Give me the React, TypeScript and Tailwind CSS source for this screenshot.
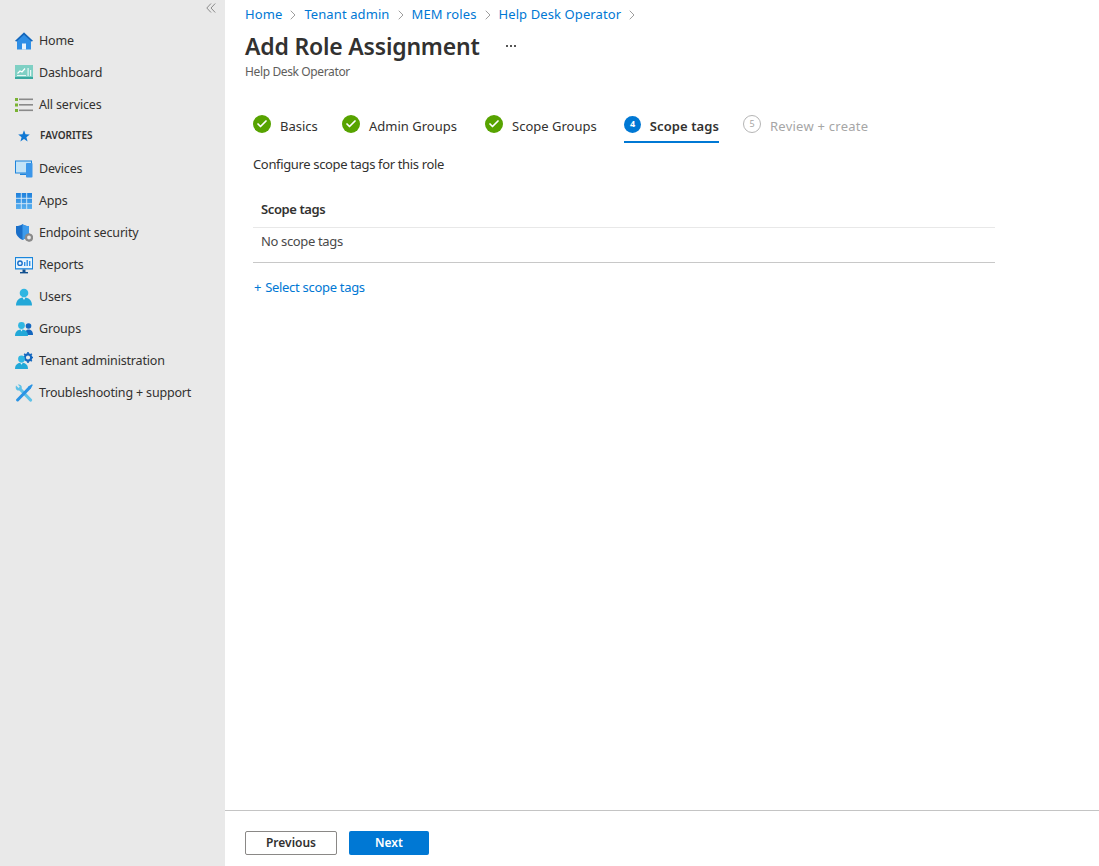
import { ChevronRight, Check } from "lucide-react";
import type { ReactNode } from "react";

const HomeIcon = () => (
  <svg width="18" height="18" viewBox="0 0 18 18">
    <path d="M9 0.5 L18 9 L16 9 L16 17.5 L2 17.5 L2 9 L0 9 Z" fill="#2f8fe6" />
    <path d="M9 0.5 L18 9 L16.4 9.6 L9 2.8 L1.6 9.6 L0 9 Z" fill="#1565b8" />
    <rect x="7" y="11.5" width="4" height="6" fill="#eaf4fc" />
  </svg>
);

const DashboardIcon = () => (
  <svg width="18" height="18" viewBox="0 0 18 18">
    <rect x="0" y="1" width="18" height="14" fill="#7fd0c4" />
    <rect x="0" y="13" width="18" height="2" fill="#3aa9a0" />
    <path d="M2.5 9.5 L5 7 L7 8 L10 4.5" stroke="#fff" strokeWidth="1.2" fill="none" />
    <rect x="2" y="11" width="9" height="1" fill="#e8f7f5" />
    <rect x="12.5" y="4" width="1.2" height="8" fill="#e8f7f5" />
    <rect x="15" y="6" width="1.2" height="6" fill="#e8f7f5" />
  </svg>
);

const ServicesIcon = () => (
  <svg width="18" height="18" viewBox="0 0 18 18">
    <rect x="0" y="2" width="3" height="3" fill="#7ab333" />
    <rect x="0" y="7.5" width="3" height="3" fill="#7ab333" />
    <rect x="0" y="13" width="3" height="3" fill="#7ab333" />
    <rect x="4" y="2.5" width="14" height="1.6" fill="#8a8a8a" />
    <rect x="4" y="8" width="14" height="1.6" fill="#8a8a8a" />
    <rect x="4" y="13.5" width="14" height="1.6" fill="#8a8a8a" />
  </svg>
);

const StarIcon = () => (
  <svg width="12" height="12" viewBox="0 0 12 12">
    <path d="M6 0.3 L7.5 4.2 L11.8 4.5 L8.4 7.2 L9.6 11.5 L6 9.1 L2.4 11.5 L3.6 7.2 L0.2 4.5 L4.5 4.2 Z" fill="#0f78d4" />
  </svg>
);

const DevicesIcon = () => (
  <svg width="18" height="18" viewBox="0 0 18 18">
    <rect x="0.5" y="1" width="16" height="12" fill="#c3e3f7" stroke="#1d84dc" strokeWidth="1" />
    <rect x="11" y="3" width="6.5" height="14.5" rx="0.8" fill="#3c97ea" />
    <rect x="5" y="13.5" width="6" height="1.5" fill="#1d84dc" />
  </svg>
);

const AppsIcon = () => (
  <svg width="18" height="18" viewBox="0 0 18 18">
    <defs>
      <linearGradient id="appsFill" x1="0" y1="0" x2="0" y2="1">
        <stop offset="0" stopColor="#1e80dc" />
        <stop offset="1" stopColor="#5ab0ef" />
      </linearGradient>
    </defs>
    <rect x="1" y="1" width="16" height="16" fill="url(#appsFill)" />
    <path d="M6.3 1 V17 M11.7 1 V17 M1 6.3 H17 M1 11.7 H17" stroke="#dcecf8" strokeWidth="0.9" />
  </svg>
);

const ShieldIcon = () => (
  <svg width="18" height="18" viewBox="0 0 18 18">
    <path d="M7.5 0 C9 1.5 11 2 14 2 L14 8 C14 11.5 11 14 7.5 16 C4 14 1 11.5 1 8 L1 2 C3.5 2 6 1.5 7.5 0 Z" fill="#1a6fc9" />
    <path d="M7.5 0 C9 1.5 11 2 14 2 L14 8 C14 11.5 11 14 7.5 16 Z" fill="#3d9bec" />
    <circle cx="14" cy="13.5" r="3" fill="#e9e9e9" stroke="#8a8a8a" strokeWidth="2.2" />
    <path d="M14 9.2 V10.5 M14 16.5 V17.8 M9.7 13.5 H11 M17 13.5 H18" stroke="#8a8a8a" strokeWidth="1.3" />
  </svg>
);

const ReportsIcon = () => (
  <svg width="18" height="18" viewBox="0 0 18 18">
    <rect x="0" y="1" width="18" height="12.5" fill="#1a86dc" />
    <rect x="1" y="2.2" width="16" height="10" fill="#eaf5fc" />
    <circle cx="5" cy="7.2" r="2.2" fill="none" stroke="#1a6fc9" strokeWidth="1.4" />
    <rect x="9" y="6" width="1.4" height="4" fill="#2f8fe6" />
    <rect x="11.5" y="4" width="1.4" height="6" fill="#2f8fe6" />
    <rect x="14" y="5" width="1.4" height="5" fill="#2f8fe6" />
    <rect x="7.5" y="13.5" width="3" height="2.5" fill="#12508f" />
    <rect x="5" y="16" width="8" height="1.4" fill="#12508f" />
  </svg>
);

const UsersIcon = () => (
  <svg width="18" height="18" viewBox="0 0 18 18">
    <circle cx="9" cy="5" r="4.3" fill="#2fb6e2" />
    <path d="M1 17.5 C1 12 4.5 9.5 9 9.5 C13.5 9.5 17 12 17 17.5 Z" fill="#22a8d8" />
    <path d="M7.5 9.6 L9 12 L10.5 9.6 Z" fill="#e3f5fb" />
  </svg>
);

const GroupsIcon = () => (
  <svg width="18" height="18" viewBox="0 0 18 18">
    <circle cx="13.5" cy="6" r="2.8" fill="#1467bf" />
    <path d="M10 15 C10 11 11.5 9.5 13.5 9.5 C15.8 9.5 18 11 18 15 Z" fill="#1467bf" />
    <circle cx="6.5" cy="5.5" r="3.4" fill="#2fb6e2" />
    <path d="M0 16 C0 11.5 3 9.5 6.5 9.5 C10 9.5 13 11.5 13 16 Z" fill="#22a8d8" />
    <path d="M5.3 9.6 L6.5 11.5 L7.7 9.6 Z" fill="#e3f5fb" />
  </svg>
);

const TenantIcon = () => (
  <svg width="18" height="18" viewBox="0 0 18 18">
    <circle cx="13" cy="5.5" r="3.2" fill="none" stroke="#1467bf" strokeWidth="2.2" />
    <path d="M13 0 V2 M13 9 V11 M7.5 5.5 H9.5 M16.5 5.5 H18 M9.2 1.7 L10.6 3.1 M15.4 7.9 L16.8 9.3 M16.8 1.7 L15.4 3.1" stroke="#1467bf" strokeWidth="1.6" />
    <circle cx="6.5" cy="7" r="3.4" fill="#2fb6e2" />
    <path d="M0 17 C0 12.5 3 10.8 6.5 10.8 C10 10.8 13 12.5 13 17 Z" fill="#22a8d8" />
    <path d="M5.3 10.9 L6.5 12.8 L7.7 10.9 Z" fill="#e3f5fb" />
  </svg>
);

const ToolsIcon = () => (
  <svg width="18" height="18" viewBox="0 0 18 18">
    <path d="M5 5 L15.5 16" stroke="#5fc2e8" strokeWidth="3.2" strokeLinecap="round" />
    <path d="M1 1.5 L3.6 4 L5 3 L2.8 0.6 C4.6 0 6.6 1 6.8 3 C7 5.4 4.8 7 2.6 6.4 C0.8 5.8 0.2 3.4 1 1.5 Z" fill="#5fc2e8" />
    <path d="M2.6 16 L14.6 3.6" stroke="#2a93e4" strokeWidth="3" strokeLinecap="round" />
    <path d="M13.2 2.4 L17 0.2 L17.8 1 L15.6 4.8 L14.2 4.4 Z" fill="#2a93e4" />
  </svg>
);

const navItems: { label: string; icon: ReactNode }[] = [
  { label: "Devices", icon: <DevicesIcon /> },
  { label: "Apps", icon: <AppsIcon /> },
  { label: "Endpoint security", icon: <ShieldIcon /> },
  { label: "Reports", icon: <ReportsIcon /> },
  { label: "Users", icon: <UsersIcon /> },
  { label: "Groups", icon: <GroupsIcon /> },
  { label: "Tenant administration", icon: <TenantIcon /> },
  { label: "Troubleshooting + support", icon: <ToolsIcon /> },
];

const NavRow = ({ label, icon }: { label: string; icon: ReactNode }) => (
  <div className="flex h-8 items-center pl-[15px]">
    <span className="flex w-[24px] shrink-0">{icon}</span>
    <span className="whitespace-nowrap text-[12.5px] tracking-[-0.17px] text-[#323130]">{label}</span>
  </div>
);

const DoneStep = ({ label, className }: { label: string; className: string }) => (
  <div className={`flex h-[33px] items-center border-b-2 border-transparent ${className}`}>
    <span className="mr-[9px] -mt-[3px] flex h-[18px] w-[18px] items-center justify-center rounded-full bg-[#57a300]">
      <Check size={12} strokeWidth={3.5} color="#fff" />
    </span>
    <span className="whitespace-nowrap pt-[2px] text-[13px] tracking-normal text-[#323130]">{label}</span>
  </div>
);

const crumbs = ["Home", "Tenant admin", "MEM roles", "Help Desk Operator"];

export default function App() {
  return (
    <div className="flex h-[866px] w-full overflow-hidden bg-white font-['Noto_Sans',sans-serif] text-[13px] tracking-[-0.35px] text-[#323130]">
      <aside className="w-[225px] shrink-0 bg-[#e9e9e9]">
        <div className="flex h-[25px] items-start justify-end pr-[9px] pt-[2px]">
          <svg width="10" height="12" viewBox="0 0 10 12" fill="none" stroke="#8a8a8a" strokeWidth="1">
            <path d="M5 1.5 L0.8 6 L5 10.5 M9.2 1.5 L5 6 L9.2 10.5" />
          </svg>
        </div>
        <NavRow label="Home" icon={<HomeIcon />} />
        <NavRow label="Dashboard" icon={<DashboardIcon />} />
        <NavRow label="All services" icon={<ServicesIcon />} />
        <div className="flex h-[32px] items-center pb-[2px] pl-[18px]">
          <span className="flex w-[22px] shrink-0">
            <StarIcon />
          </span>
          <span className="mb-[2px] text-[10px] font-semibold tracking-normal text-[#323130]">FAVORITES</span>
        </div>
        {navItems.map((item) => (
          <NavRow key={item.label} label={item.label} icon={item.icon} />
        ))}
      </aside>

      <main className="flex min-w-0 flex-1 flex-col">
        <div className="flex-1 pl-[20px]">
          <nav className="flex h-[29px] items-center tracking-[0.1px]">
            {crumbs.map((c) => (
              <div key={c} className="flex items-center">
                <span className="text-[#0078d4]">{c}</span>
                <ChevronRight size={16} strokeWidth={1.1} color="#7a7a7a" className="mx-[3px]" />
              </div>
            ))}
          </nav>
          <div className="flex h-[34px] items-center">
            <h1 className="text-[23px] font-semibold tracking-[-0.2px] text-[#323130]">Add Role Assignment</h1>
            <span className="ml-[26px] flex gap-[2px]">
              <i className="h-[2px] w-[2px] bg-[#555]" />
              <i className="h-[2px] w-[2px] bg-[#555]" />
              <i className="h-[2px] w-[2px] bg-[#555]" />
            </span>
          </div>
          <p className="mt-[1px] text-[12px] leading-[16px] tracking-[-0.37px] text-[#605e5c]">Help Desk Operator</p>

          <div className="pl-[8px]">
            <div className="mt-[30px] flex items-start">
              <DoneStep label="Basics" className="w-[89px]" />
              <DoneStep label="Admin Groups" className="w-[143px]" />
              <DoneStep label="Scope Groups" className="w-[139px]" />
              <div className="flex h-[33px] w-[95px] shrink-0 items-center border-b-2 border-[#0078d4]">
                <span className="mr-[9px] -mt-[3px] flex h-[17px] w-[17px] items-center justify-center rounded-full bg-[#0078d4] text-[9px] font-bold text-white">
                  4
                </span>
                <span className="whitespace-nowrap pt-[2px] font-semibold tracking-[0.1px] text-[#323130]">Scope tags</span>
              </div>
              <div className="ml-[24px] flex h-[33px] items-center border-b-2 border-transparent text-[#a6a6a6]">
                <span className="mr-[9px] -mt-[3px] flex h-[18px] w-[18px] items-center justify-center rounded-full border border-[#b5b5b5] text-[9px]">
                  5
                </span>
                <span className="whitespace-nowrap pt-[2px] tracking-[0.25px]">Review + create</span>
              </div>
            </div>

            <p className="mt-[12px] leading-[18px]">Configure scope tags for this role</p>

            <div className="mt-[18px] w-[742px]">
              <div className="flex h-[37px] items-center border-b border-[#e8e8e8] px-2 pt-[2px] font-semibold tracking-[-0.4px]">
                Scope tags
              </div>
              <div className="flex h-[35px] items-center border-b border-[#c8c8c8] px-2 pb-[6px] text-[#4a4a4a]">
                No scope tags
              </div>
            </div>

            <p className="mt-[15px] flex gap-[4px] pl-[1px] leading-[18px] tracking-[-0.3px] text-[#0078d4]">
              <span>+</span>
              <span>Select scope tags</span>
            </p>
          </div>
        </div>

        <footer className="flex h-[56px] items-start gap-[12px] border-t border-[#c4c4c4] pl-[20px] pt-[20px]">
          <button className="flex h-[24px] w-[92px] items-center justify-center rounded-[2px] border border-[#8a8886] bg-white text-[12px] font-semibold tracking-normal text-[#323130]">
            Previous
          </button>
          <button className="flex h-[24px] w-[80px] items-center justify-center rounded-[2px] bg-[#0078d4] text-[12px] font-semibold tracking-normal text-white">
            Next
          </button>
        </footer>
      </main>
    </div>
  );
}
